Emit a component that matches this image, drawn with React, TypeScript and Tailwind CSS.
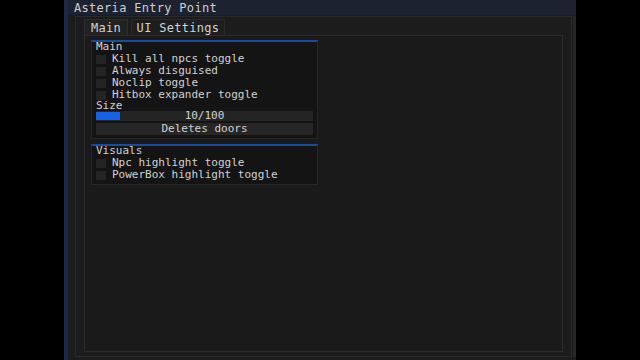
import { ReactNode } from 'react'

const MAIN_TOGGLES = ['Kill all npcs toggle', 'Always disguised', 'Noclip toggle', 'Hitbox expander toggle']
const VISUAL_TOGGLES = ['Npc highlight toggle', 'PowerBox highlight toggle']

function Toggle({ label }: { label: string }) {
  return (
    <div className="flex items-center h-[12px]">
      <div className="w-[10px] h-[9px] bg-[#242424] mr-[6px]" />
      <span className="leading-[12px]">{label}</span>
    </div>
  )
}

function Group({ title, children }: { title: string; children: ReactNode }) {
  return (
    <div className="w-[227px] bg-[#141414] border border-[#262626] border-t-2 border-t-[#1c4a9c] px-[4px] pb-[3px]">
      <div className="h-[11px] leading-[10px]">{title}</div>
      {children}
    </div>
  )
}

export default function App() {
  return (
    <div
      className="w-[640px] h-[360px] bg-black flex overflow-hidden text-[#d2d2d2] text-[11px]"
      style={{ fontFamily: '"DejaVu Sans Mono", "Liberation Mono", monospace' }}
    >
      <div className="ml-[64px] w-[512px] h-full flex flex-col bg-[#1c1c1c] border-l-4 border-[#1b2a48]">
        <div className="h-[15px] bg-[#1d2231] pl-[6px] leading-[16px] text-[12px] tracking-[0.3px] text-[#cfcfcf]">
          Asteria Entry Point
        </div>
        <div className="flex-1 flex pt-[1px] pl-[7px] pr-[4px] pb-[3px]">
          <div className="flex-1 flex flex-col border border-[#2a2a2a] px-[8px] pt-[2px] pb-[4px]">
            <div className="flex gap-[3px] h-[16px] text-[12px] tracking-[0.3px]">
              <div className="w-[44px] text-center bg-[#222222] border border-[#2e2e2e] border-b-0 leading-[16px]">Main</div>
              <div className="w-[94px] text-center bg-[#1e1e1e] border border-[#2a2a2a] border-b-0 leading-[16px]">UI Settings</div>
            </div>
            <div className="flex-1 flex flex-col gap-[5px] bg-[#1a1a1a] border border-[#2c2c2c] pl-[6px] pt-[4px]">
              <Group title="Main">
                {MAIN_TOGGLES.map(t => (
                  <Toggle key={t} label={t} />
                ))}
                <div className="h-[10px] leading-[10px]">Size</div>
                <div className="relative h-[10px] bg-[#242424] flex items-center justify-center">
                  <div className="absolute left-0 top-[1px] h-[8px] w-[24px] bg-[#1462e6]" />
                  <span className="relative leading-[10px]">10/100</span>
                </div>
                <div className="h-[12px] mt-[2px] bg-[#262626] flex items-center justify-center leading-[12px]">
                  Deletes doors
                </div>
              </Group>
              <Group title="Visuals">
                {VISUAL_TOGGLES.map(t => (
                  <Toggle key={t} label={t} />
                ))}
              </Group>
            </div>
          </div>
          <div className="w-[3px] bg-[#262626] -mr-[4px] ml-[1px]" />
        </div>
      </div>
    </div>
  )
}
